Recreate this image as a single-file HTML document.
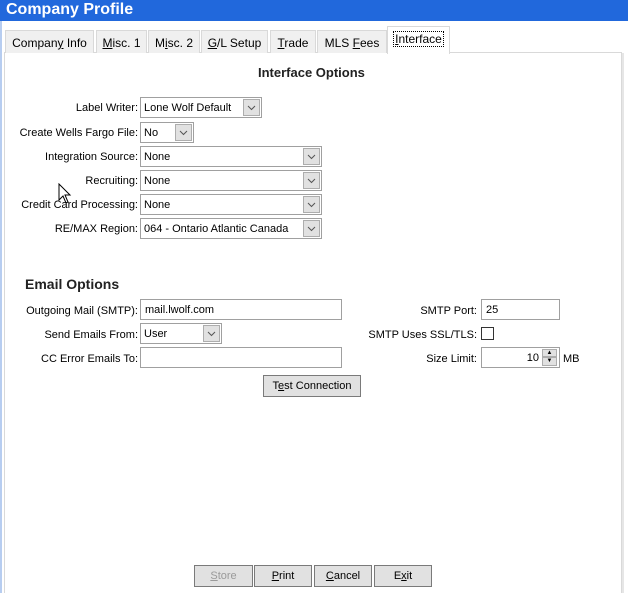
<!DOCTYPE html>
<html><head><style>
*{box-sizing:border-box;margin:0;padding:0}
html,body{width:628px;height:593px;overflow:hidden}
body{background:#fff;font-family:"Liberation Sans",Arial,sans-serif;font-size:11px;color:#000;position:relative}
.a{position:absolute}
.title{left:0;top:0;width:628px;height:21px;background:#2168dc;color:#fff;font-weight:bold;font-size:16px;padding:1px 0 0 6px}
.lb{left:0;top:21px;width:2px;height:572px;background:#b7cdf0}
.tab{top:30px;height:23px;background:#f0f0f0;border:1px solid #d9d9d9;border-bottom:none;font-size:12px;text-align:center;padding-top:5px;color:#000}
.panel{left:4px;top:52px;width:618px;height:541px;border:1px solid #d9d9d9;border-bottom:none;background:#fff}
.lab{text-align:right}
.sel{height:21px;border:1px solid #a0a0a0;background:#fff;padding:4px 0 0 3px}
.sel .ar{position:absolute;right:1px;top:1px;width:17px;height:17px;background:#e1e1e1;border:1px solid #adadad}
.inp{height:21px;border:1px solid #a0a0a0;background:#fff;padding:4px 0 0 4px}
.btn{height:22px;background:#e1e1e1;border:1px solid #7a7a7a;text-align:center;padding-top:4px}
u{text-decoration:underline}
</style></head><body>
<div class="a title">Company Profile</div>
<div class="a lb"></div>
<div class="a" style="left:622px;top:53px;width:2px;height:540px;background:#e6e6e6"></div>
<div class="a panel"></div>
<div class="a tab" style="left:5px;width:89px">Compan<u>y</u> Info</div>
<div class="a tab" style="left:96px;width:51px"><u>M</u>isc. 1</div>
<div class="a tab" style="left:148px;width:52px">M<u>i</u>sc. 2</div>
<div class="a tab" style="left:201px;width:67px"><u>G</u>/L Setup</div>
<div class="a tab" style="left:270px;width:46px"><u>T</u>rade</div>
<div class="a tab" style="left:317px;width:70px">MLS <u>F</u>ees</div>
<div class="a tab" style="left:387px;top:26px;height:28px;width:63px;background:#fff;border-color:#d9d9d9;padding-top:5px"><span style="outline:1px dotted #000;padding:0 1px"><u>I</u>nterface</span></div>
<div class="a" style="left:258px;top:65px;font-weight:bold;font-size:13px;color:#222">Interface Options</div>

<svg width="0" height="0" style="position:absolute"><defs><symbol id="cv" viewBox="0 0 15 15"><path d="M4 6 L7.5 9.5 L11 6" fill="none" stroke="#555" stroke-width="1"/></symbol></defs></svg>

<div class="a lab" style="left:0;width:138px;top:102px">Label Writer:</div>
<div class="a sel" style="left:140px;top:97px;width:122px">Lone Wolf Default<div class="ar"><svg width="15" height="15"><use href="#cv"/></svg></div></div>
<div class="a lab" style="left:0;width:138px;top:127px">Create Wells Fargo File:</div>
<div class="a sel" style="left:140px;top:122px;width:54px">No<div class="ar"><svg width="15" height="15"><use href="#cv"/></svg></div></div>
<div class="a lab" style="left:0;width:138px;top:151px">Integration Source:</div>
<div class="a sel" style="left:140px;top:146px;width:182px">None<div class="ar"><svg width="15" height="15"><use href="#cv"/></svg></div></div>
<div class="a lab" style="left:0;width:138px;top:175px">Recruiting:</div>
<div class="a sel" style="left:140px;top:170px;width:182px">None<div class="ar"><svg width="15" height="15"><use href="#cv"/></svg></div></div>
<div class="a lab" style="left:0;width:138px;top:199px">Credit Card Processing:</div>
<div class="a sel" style="left:140px;top:194px;width:182px">None<div class="ar"><svg width="15" height="15"><use href="#cv"/></svg></div></div>
<div class="a lab" style="left:0;width:138px;top:223px">RE/MAX Region:</div>
<div class="a sel" style="left:140px;top:218px;width:182px">064 - Ontario Atlantic Canada<div class="ar"><svg width="15" height="15"><use href="#cv"/></svg></div></div>
<svg class="a" style="left:58px;top:183px" width="14" height="22"><path d="M1 1 L1 17 L5 13 L8 20 L10 19 L7 12 L12 12 Z" fill="#fff" stroke="#000"/></svg>

<div class="a" style="left:25px;top:276px;font-weight:bold;font-size:14px;color:#222">Email Options</div>
<div class="a lab" style="left:0;width:138px;top:305px">Outgoing Mail (SMTP):</div>
<div class="a inp" style="left:140px;top:299px;width:202px">mail.lwolf.com</div>
<div class="a lab" style="left:0;width:138px;top:329px">Send Emails From:</div>
<div class="a sel" style="left:140px;top:323px;width:82px">User<div class="ar"><svg width="15" height="15"><use href="#cv"/></svg></div></div>
<div class="a lab" style="left:0;width:138px;top:353px">CC Error Emails To:</div>
<div class="a inp" style="left:140px;top:347px;width:202px"></div>
<div class="a lab" style="left:340px;width:137px;top:305px">SMTP Port:</div>
<div class="a inp" style="left:481px;top:299px;width:79px">25</div>
<div class="a lab" style="left:340px;width:137px;top:329px">SMTP Uses SSL/TLS:</div>
<div class="a" style="left:481px;top:327px;width:13px;height:13px;border:1px solid #333;background:#fff"></div>
<div class="a lab" style="left:340px;width:137px;top:353px">Size Limit:</div>
<div class="a inp" style="left:481px;top:347px;width:79px;text-align:right;padding-right:20px">10</div>
<div class="a" style="left:542px;top:349px;width:15px;height:8px;background:#e1e1e1;border:1px solid #adadad;font-size:6px;text-align:center;line-height:6px">&#9650;</div>
<div class="a" style="left:542px;top:357px;width:15px;height:9px;background:#e1e1e1;border:1px solid #adadad;font-size:6px;text-align:center;line-height:7px">&#9660;</div>
<div class="a" style="left:563px;top:353px">MB</div>
<div class="a btn" style="left:263px;top:375px;width:98px">T<u>e</u>st Connection</div>

<div class="a btn" style="left:194px;top:565px;width:59px;color:#9a9a9a"><u>S</u>tore</div>
<div class="a btn" style="left:254px;top:565px;width:58px"><u>P</u>rint</div>
<div class="a btn" style="left:314px;top:565px;width:58px"><u>C</u>ancel</div>
<div class="a btn" style="left:374px;top:565px;width:58px">E<u>x</u>it</div>
</body></html>
